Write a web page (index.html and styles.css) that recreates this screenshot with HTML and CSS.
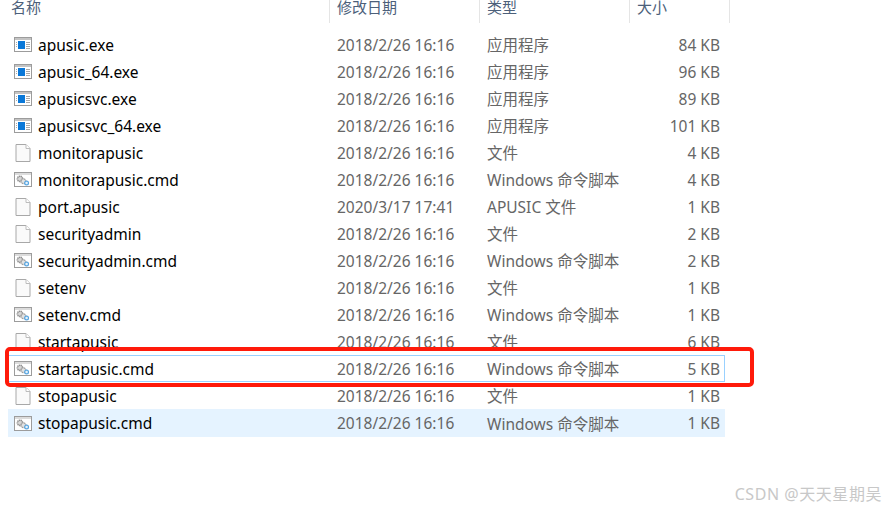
FILE: index.html
```html
<!DOCTYPE html>
<html lang="zh-CN">
<head>
    <meta charset="UTF-8">
    <title>apusic bin</title>
    <link rel="stylesheet" href="styles.css">
</head>
<body>
    <svg class="defs" width="0" height="0">
        <symbol id="exe" viewBox="0 0 18 15">
            <rect x="0.5" y="0.5" width="17" height="14" fill="#fff" stroke="#9c9c9c"/>
            <rect x="1" y="1" width="16" height="2" fill="#c4c4c4"/>
            <rect x="4" y="4" width="7" height="8" fill="#0a78d8"/>
            <path d="M12 5.5h4M12 7.5h4M12 9.5h4M12 11.5h4M2 5.5h1M2 7.5h1M2 9.5h1" stroke="#a9a9a9"/>
        </symbol>
        <symbol id="doc" viewBox="0 0 15 18">
            <path d="M0.5 0.5H10.5L14.5 4.5V17.5H0.5Z" fill="#fafafa" stroke="#a8a8a8"/>
            <path d="M10.5 0.5V4.5H14.5" fill="#fff" stroke="#bcbcbc"/>
        </symbol>
        <symbol id="cmd" viewBox="0 0 18 15">
            <rect x="0.5" y="0.5" width="17" height="14" fill="#fff" stroke="#9c9c9c"/>
            <rect x="1" y="1" width="16" height="2" fill="#dcdcdc"/>
            <circle cx="6" cy="6.8" r="2.6" fill="#d8d8d8" stroke="#8f8f8f" stroke-width="1.6" stroke-dasharray="1.3 0.5"/>
            <circle cx="9.4" cy="9.2" r="2.4" fill="#e2e2e2" stroke="#a0a0a0" stroke-width="1.4" stroke-dasharray="1.3 0.5"/>
            <circle cx="12.6" cy="11" r="1.9" fill="#e6f2fb" stroke="#5aa6e0" stroke-width="1.2"/>
        </symbol>
    </svg>

    <div class="list">
        <div class="head">
            <div class="col-name">名称</div>
            <div class="col-date">修改日期</div>
            <div class="col-type">类型</div>
            <div class="col-size">大小</div>
        </div>
        <div class="rows">
            <div class="row"><svg class="ico"><use href="#exe"/></svg><span class="name">apusic.exe</span><span class="date">2018/2/26 16:16</span><span class="type">应用程序</span><span class="size">84 KB</span></div>
            <div class="row"><svg class="ico"><use href="#exe"/></svg><span class="name">apusic_64.exe</span><span class="date">2018/2/26 16:16</span><span class="type">应用程序</span><span class="size">96 KB</span></div>
            <div class="row"><svg class="ico"><use href="#exe"/></svg><span class="name">apusicsvc.exe</span><span class="date">2018/2/26 16:16</span><span class="type">应用程序</span><span class="size">89 KB</span></div>
            <div class="row"><svg class="ico"><use href="#exe"/></svg><span class="name">apusicsvc_64.exe</span><span class="date">2018/2/26 16:16</span><span class="type">应用程序</span><span class="size">101 KB</span></div>
            <div class="row"><svg class="ico ico-doc"><use href="#doc"/></svg><span class="name">monitorapusic</span><span class="date">2018/2/26 16:16</span><span class="type">文件</span><span class="size">4 KB</span></div>
            <div class="row"><svg class="ico"><use href="#cmd"/></svg><span class="name">monitorapusic.cmd</span><span class="date">2018/2/26 16:16</span><span class="type">Windows 命令脚本</span><span class="size">4 KB</span></div>
            <div class="row"><svg class="ico ico-doc"><use href="#doc"/></svg><span class="name">port.apusic</span><span class="date">2020/3/17 17:41</span><span class="type">APUSIC 文件</span><span class="size">1 KB</span></div>
            <div class="row"><svg class="ico ico-doc"><use href="#doc"/></svg><span class="name">securityadmin</span><span class="date">2018/2/26 16:16</span><span class="type">文件</span><span class="size">2 KB</span></div>
            <div class="row"><svg class="ico"><use href="#cmd"/></svg><span class="name">securityadmin.cmd</span><span class="date">2018/2/26 16:16</span><span class="type">Windows 命令脚本</span><span class="size">2 KB</span></div>
            <div class="row"><svg class="ico ico-doc"><use href="#doc"/></svg><span class="name">setenv</span><span class="date">2018/2/26 16:16</span><span class="type">文件</span><span class="size">1 KB</span></div>
            <div class="row"><svg class="ico"><use href="#cmd"/></svg><span class="name">setenv.cmd</span><span class="date">2018/2/26 16:16</span><span class="type">Windows 命令脚本</span><span class="size">1 KB</span></div>
            <div class="row"><svg class="ico ico-doc"><use href="#doc"/></svg><span class="name">startapusic</span><span class="date">2018/2/26 16:16</span><span class="type">文件</span><span class="size">6 KB</span></div>
            <div class="row focused"><svg class="ico"><use href="#cmd"/></svg><span class="name">startapusic.cmd</span><span class="date">2018/2/26 16:16</span><span class="type">Windows 命令脚本</span><span class="size">5 KB</span></div>
            <div class="row"><svg class="ico ico-doc"><use href="#doc"/></svg><span class="name">stopapusic</span><span class="date">2018/2/26 16:16</span><span class="type">文件</span><span class="size">1 KB</span></div>
            <div class="row selected"><svg class="ico"><use href="#cmd"/></svg><span class="name">stopapusic.cmd</span><span class="date">2018/2/26 16:16</span><span class="type">Windows 命令脚本</span><span class="size">1 KB</span></div>
        </div>
    </div>

    <div class="red-box"></div>
    <div class="watermark">CSDN @天天星期吴</div>
</body>
</html>
```

FILE: styles.css
```css
* {
    margin: 0;
    padding: 0;
    box-sizing: border-box;
}

html,
body {
    height: 100%;
    overflow: hidden;
}

body {
    background-color: #ffffff;
    color: #000;
    font-family: "Noto Sans", "Noto Sans CJK SC", sans-serif;
    font-size: 15.5px;
    position: relative;
}

.defs {
    position: absolute;
}

.list {
    margin-left: 8px;
    width: 722px;
}

.head {
    display: flex;
    height: 23px;
    color: #4c607a;
    font-size: 15px;
    line-height: 14px;
}

.head div {
    padding-left: 7px;
    border-right: 1px solid #e5e5e5;
}

.head .col-name {
    width: 322px;
    padding-left: 3px;
}

.head .col-date,
.head .col-type {
    width: 150px;
}

.head .col-size {
    width: 100px;
}

.rows {
    margin-top: 8px;
    width: 717px;
}

.row {
    display: flex;
    align-items: center;
    height: 27px;
    border: 1px solid transparent;
    color: #666;
}

.row.focused {
    border-color: #99d1ff;
}

.row.selected {
    height: 28px;
    background-color: #e5f3ff;
}

.ico {
    width: 18px;
    height: 15px;
    margin-left: 5px;
    flex-shrink: 0;
}

.ico-doc {
    height: 18px;
}

.name {
    width: 299px;
    margin-left: 6px;
    color: #000;
}

.date,
.type {
    width: 150px;
}

.size {
    width: 83px;
    text-align: right;
}

.red-box {
    position: absolute;
    left: 5px;
    top: 347px;
    width: 749px;
    height: 40px;
    border: 4px solid #ff1a0a;
    border-radius: 5px;
}

.watermark {
    position: absolute;
    right: 4px;
    top: 481px;
    font-size: 16px;
    color: #c8c8c8;
    letter-spacing: 0.55px;
}
```
